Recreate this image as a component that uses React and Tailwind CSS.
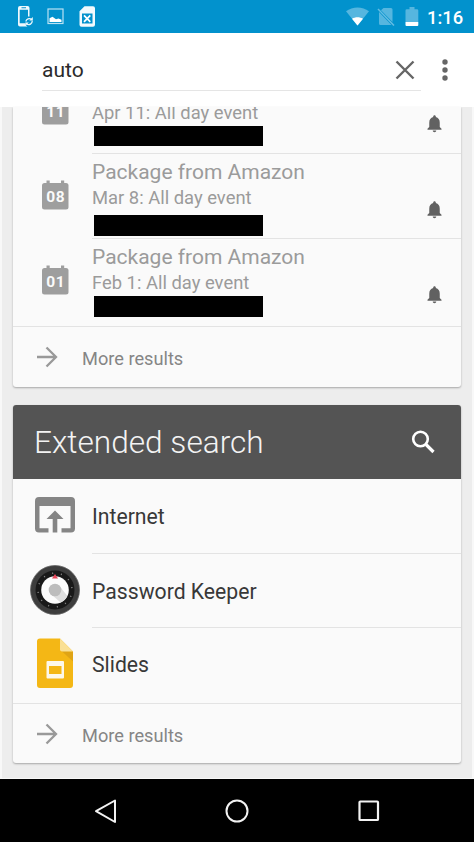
import React from "react";

function Calendar({ day, className }) {
  return (
    <svg className={`h-[30px] w-[27px] shrink-0 ${className}`} viewBox="0 0 27 30">
      <path d="M4.5 0.5h3.2v4H4.5zM19 0.5h3.2v4H19z" fill="#9e9e9e" />
      <rect x="0" y="3" width="26.5" height="26.5" rx="2.5" fill="#9e9e9e" />
      <text x="4.3" y="21.8" fill="#fafafa" fontSize="15.5" fontWeight="700" fontFamily="Roboto, sans-serif" letterSpacing="0.5">
        {day}
      </text>
    </svg>
  );
}

function Bell({ className }) {
  return (
    <svg className={`size-[21px] shrink-0 ${className}`} viewBox="0 0 24 24" fill="#616161">
      <path d="M12 22c1.1 0 2-.9 2-2h-4c0 1.1.9 2 2 2zm6-6v-5c0-3.07-1.63-5.64-4.5-6.32V4c0-.83-.67-1.5-1.5-1.5s-1.5.67-1.5 1.5v.68C7.64 5.36 6 7.92 6 11v5l-2 2v1h16v-1l-2-2z" />
    </svg>
  );
}

function EventRow({ day, title, date, rowClass, iconClass, titleClass, dateClass, barClass, bellClass }) {
  return (
    <div className={`flex items-start pl-[29px] ${rowClass}`}>
      <Calendar day={day} className={iconClass} />
      <div className="ml-[23px] flex flex-1 flex-col items-start whitespace-nowrap text-[#9b9b9b]">
        {title && <span className={`text-[21px] leading-[26px] ${titleClass}`}>{title}</span>}
        <span className={`text-[18.4px] leading-[26px] ${dateClass}`}>{date}</span>
        <span className={`ml-[1.5px] w-[169px] bg-black ${barClass}`} />
      </div>
      <Bell className={`mr-[16px] ${bellClass}`} />
    </div>
  );
}

function MoreResults() {
  return (
    <div className="flex h-[60px] items-center border-t border-[#e3e3e3] pl-[23px]">
      <svg className="mt-px h-[22px] w-[22px]" viewBox="0 0 22 22" fill="none" stroke="#999" strokeWidth="2.3">
        <path d="M1 11h19M10.5 1.5L20 11l-9.5 9.5" />
      </svg>
      <span className="ml-[24px] pt-[5px] text-[18.2px] text-[#858585]">More results</span>
    </div>
  );
}

function InternetIcon() {
  return (
    <svg className="mb-[3px] h-[36px] w-[40px]" viewBox="0 0 40 36" fill="#858585">
      <path fillRule="evenodd" d="M4 0h32a4 4 0 0 1 4 4v27.5a4 4 0 0 1-4 4h-9.500v-4.300h9V9H4.500v22.200h9v4.300H4a4 4 0 0 1-4-4V4a4 4 0 0 1 4-4z" />
      <path d="M20 13.500l8.500 8.600h-6.200v13.400h-4.600V22.100h-6.200z" />
    </svg>
  );
}

const TICKS = Array.from({ length: 12 }, (_, i) => i * 30);

function SafeDialIcon() {
  return (
    <svg className="mb-[3px] size-[50px]" viewBox="0 0 50 50">
      <circle cx="25" cy="25" r="24.500" fill="#3d3d3d" stroke="#666" strokeWidth="0.800" />
      <circle cx="25" cy="25" r="19.500" fill="#191919" />
      {TICKS.map((a) => (
        <path key={a} d="M25 7.300v1.500" stroke="#8a8a8a" strokeWidth="1" transform={`rotate(${a + 22} 25 25)`} />
      ))}
      <circle cx="25" cy="25" r="13.800" fill="#fcfcfc" />
      <path d="M29.500 21L37.400 31a13.800 13.800 0 0 1-6.700 6.600L20.800 29z" fill="#dedede" />
      <circle cx="25" cy="25" r="6.300" fill="#bdbdbd" />
      <path d="M25 9l3 4.500h-6z" fill="#e8485b" />
    </svg>
  );
}

function SlidesIcon() {
  return (
    <svg className="mb-[5px] h-[50px] w-[36px]" viewBox="0 0 36 50">
      <path d="M3 .5h20L36 13.500V47a3 3 0 0 1-3 3H3a3 3 0 0 1-3-3V3.500a3 3 0 0 1 3-3z" fill="#f4b715" />
      <path d="M24 12.500l12 11V13.500z" fill="#dfa415" />
      <path d="M23 .5l13 13H25a2 2 0 0 1-2-2z" fill="#fae094" />
      <path fillRule="evenodd" d="M10.500 23h15.500a1 1 0 0 1 1 1v15.500a1 1 0 0 1-1 1H10.500a1 1 0 0 1-1-1V24a1 1 0 0 1 1-1zm1.500 5v8h12.500v-8z" fill="#fdf8ea" />
    </svg>
  );
}

function AppRow({ icon, label, className, labelClass }) {
  return (
    <div className={`flex pl-[17px] ${className}`}>
      <div className="flex w-[50px] items-center justify-center">{icon}</div>
      <div className={`ml-3 flex flex-1 items-center border-b border-inherit text-[21.200px] text-[#383838] ${labelClass}`}>{label}</div>
    </div>
  );
}

export default function App() {
  return (
    <div className="flex h-[842px] w-[474px] flex-col overflow-hidden bg-[#ededed] font-['Roboto',sans-serif]">
      <header className="flex h-[33px] shrink-0 items-center bg-[#0292cd] text-white">
        <svg className="ml-[17px] h-[22px] w-[17px]" viewBox="0 0 17 22">
          <path fillRule="evenodd" fill="#eef8fc" d="M3 0h7.500a2 2 0 0 1 2 2v8.500h-1.500V3.800H2.700v13.400H8a5 5 0 0 0 2.500 3.300H3a2 2 0 0 1-2-2V2a2 2 0 0 1 2-2zM4.500 1.300v1h4.500v-1z" />
          <path d="M8.800 15.500a3.700 3.700 0 0 1 5.600-2.300M15.300 14.800a3.700 3.700 0 0 1-5.600 3.300" fill="none" stroke="#eef8fc" strokeWidth="1.200" />
          <path d="M15.800 11v3.500h-3.500zM8.300 20v-3.500h3.500z" fill="#eef8fc" />
        </svg>
        <svg className="ml-[13px] h-[17px] w-[17px]" viewBox="0 0 17 17">
          <rect x="1" y="1" width="15" height="14.500" fill="none" stroke="#b9e1f3" strokeWidth="1.200" />
          <path d="M2.500 14v-3.800l3-1.400 3.500 2.400 2.500-.7 3 1.300V14z" fill="#fff" />
        </svg>
        <svg className="ml-[15px] h-[21px] w-[17px]" viewBox="0 0 17 21">
          <path fill="#f2fafd" fillRule="evenodd" d="M5.500.3H14a2 2 0 0 1 2 2v16.400a2 2 0 0 1-2 2H2.500a2 2 0 0 1-2-2V5.300zM3 7.500v10h10.500v-10z" />
          <path d="M5 9.300l6.300 6.500M11.300 9.300L5 15.800" stroke="#fff" strokeWidth="1.700" />
        </svg>
        <svg className="ml-auto h-[19px] w-[23px]" viewBox="0 0 23 19">
          <path d="M11.500 18.500L0 4.300C6.500-.8 16.500-.8 23 4.300z" fill="#56b6df" />
          <path d="M11.500 18.500L6 11.700c3.300-2 7.700-2 11 0z" fill="#fff" />
        </svg>
        <svg className="ml-[8px] h-[18px] w-[18px]" viewBox="0 0 18 18">
          <path d="M6.500 0H14a1.500 1.500 0 0 1 1.500 1.500V14L4 2.300zM2 4l12.500 13H3.500A1.500 1.500 0 0 1 2 15.500z" fill="#56b6df" />
          <path d="M1 1l16 16.500" stroke="#63bce2" strokeWidth="1.500" />
        </svg>
        <svg className="ml-[10px] h-[20px] w-[14px]" viewBox="0 0 14 20">
          <path d="M4.500 0h5v2.200H12a1.300 1.300 0 0 1 1.300 1.300V15H.5V3.500A1.300 1.300 0 0 1 1.800 2.200h2.700z" fill="#56b6df" />
          <path d="M.5 15h12.800v3a1 1 0 0 1-1 1H1.500a1 1 0 0 1-1-1z" fill="#fff" />
        </svg>
        <span className="mr-[10px] ml-[8px] w-[37px] whitespace-nowrap pt-[2px] text-[18.400px] font-medium">1:16</span>
      </header>

      <div className="flex h-[74px] shrink-0 items-start bg-white pl-[42px]">
        <div className="flex h-[58px] w-[379px] items-center justify-between border-b border-[#e5e5e5] pt-[17px] pr-[6px]">
          <span className="pt-[2px] text-[21px] text-[#2b2b2b]">auto</span>
          <svg className="size-[20px]" viewBox="0 0 20 20" stroke="#666" strokeWidth="2.400">
            <path d="M1.500 1.500l17 17M18.500 1.500l-17 17" />
          </svg>
        </div>
        <svg className="mt-[26px] ml-[21px] h-[22px] w-[6px]" viewBox="0 0 6 22" fill="#666">
          <circle cx="3" cy="3" r="2.700" />
          <circle cx="3" cy="11" r="2.700" />
          <circle cx="3" cy="19" r="2.700" />
        </svg>
      </div>

      <main className="flex h-[672px] shrink-0 flex-col border-x-2 border-b border-[#f8f8f8] px-[11px]">
        <section className="h-[280px] rounded-b-[3px] bg-[#fafafa] shadow-[0_1px_2px_rgba(0,0,0,0.3)]">
          <EventRow
            day="11"
            date="Apr 11: All day event"
            rowClass="h-[46px] overflow-hidden"
            iconClass="-mt-[12px]"
            dateClass="-mt-[7px]"
            barClass="h-[20px]"
            bellClass="mt-[6px]"
          />
          <div className="ml-[79px] h-px bg-[#e3e3e3]" />
          <EventRow
            day="08"
            title="Package from Amazon"
            date="Mar 8: All day event"
            rowClass="h-[84px]"
            iconClass="mt-[26px]"
            titleClass="mt-[5px]"
            dateClass=""
            barClass="mt-[4px] h-[21px]"
            bellClass="mt-[45px]"
          />
          <div className="ml-[79px] h-px bg-[#e3e3e3]" />
          <EventRow
            day="01"
            title="Package from Amazon"
            date="Feb 1: All day event"
            rowClass="h-[87px]"
            iconClass="mt-[26px]"
            titleClass="mt-[5px]"
            dateClass=""
            barClass="h-[21px]"
            bellClass="mt-[45px]"
          />
          <MoreResults />
        </section>

        <section className="mt-[18px] h-[358px] rounded-[3px] bg-[#fafafa] shadow-[0_1px_2px_rgba(0,0,0,0.3)]">
          <div className="flex h-[74px] items-center justify-between rounded-t-[3px] bg-[#545454] pr-[26px] pl-[21px]">
            <h2 className="pt-[2px] text-[31.600px] font-light text-[#f3f3f3]">Extended search</h2>
            <svg className="size-[24px]" viewBox="0 0 24 24" fill="none" stroke="#fff">
              <circle cx="9.500" cy="9" r="7.300" strokeWidth="2.600" />
              <path d="M15 14.500l7.500 7.500" strokeWidth="3.200" />
            </svg>
          </div>
          <AppRow icon={<InternetIcon />} label="Internet" className="h-[75px] border-[#e3e3e3]" labelClass="pt-[2px]" />
          <AppRow icon={<SafeDialIcon />} label="Password Keeper" className="h-[74px] border-[#e3e3e3]" labelClass="pt-[2px]" />
          <AppRow icon={<SlidesIcon />} label="Slides" className="h-[75px] border-transparent" labelClass="pb-px" />
          <MoreResults />
        </section>
      </main>

      <nav className="flex h-[63px] shrink-0 items-center bg-black">
        <svg className="ml-[94px] size-[26px]" viewBox="0 0 26 26" fill="none" stroke="#f2f2f2" strokeWidth="2" strokeLinejoin="round">
          <path d="M21 2.500v21.500L2 13.200z" />
        </svg>
        <svg className="ml-[105px] size-[24px]" viewBox="0 0 24 24" fill="none" stroke="#f2f2f2" strokeWidth="2">
          <circle cx="12" cy="12" r="10.500" />
        </svg>
        <svg className="ml-[109px] size-[22px]" viewBox="0 0 22 22" fill="none" stroke="#f2f2f2" strokeWidth="2.200">
          <rect x="1.500" y="1.500" width="18.500" height="18.500" rx="0.800" />
        </svg>
      </nav>
    </div>
  );
}
